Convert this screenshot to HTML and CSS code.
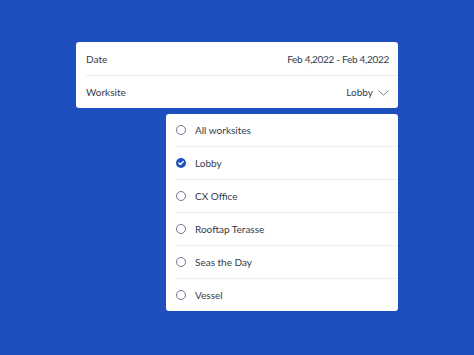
FILE: index.html
```html
<!DOCTYPE html>
<html>
<head>
<meta charset="utf-8">
<link rel="stylesheet" href="styles.css">
</head>
<body>
<div class="stage">
  <div class="card summary">
    <div class="row">
      <span class="label">Date</span>
      <span class="value date">Feb 4,2022 - Feb 4,2022</span>
    </div>
    <div class="row">
      <span class="label">Worksite</span>
      <span class="value">Lobby
        <svg class="chev" width="11" height="6" viewBox="0 0 11 6"><path d="M0.5 0.6 L5.5 5.2 L10.5 0.6" fill="none" stroke="#7a8194" stroke-width="1"/></svg>
      </span>
    </div>
  </div>
  <div class="card menu">
    <div class="opt"><span class="radio"></span><span>All worksites</span></div>
    <div class="opt"><svg class="check" width="10" height="10" viewBox="0 0 10 10"><circle cx="5" cy="5" r="5" fill="#1f4ebf"/><path d="M2.8 5.1 L4.4 6.6 L7.2 3.6" fill="none" stroke="#fff" stroke-width="1.4" stroke-linecap="round" stroke-linejoin="round"/></svg><span>Lobby</span></div>
    <div class="opt"><span class="radio"></span><span>CX Office</span></div>
    <div class="opt"><span class="radio"></span><span>Rooftap Terasse</span></div>
    <div class="opt"><span class="radio"></span><span>Seas the Day</span></div>
    <div class="opt"><span class="radio"></span><span>Vessel</span></div>
  </div>
</div>
</body>
</html>
```
FILE: styles.css
```css
html, body {
  margin: 0;
  padding: 0;
  background: #1f4ebf;
  width: 474px;
  height: 355px;
  overflow: hidden;
  font-family: "Lato", "Liberation Sans", sans-serif;
  font-size: 10px;
  color: #343b4c;
}
.stage {
  display: flex;
  flex-direction: column;
  padding-top: 42px;
}
.card {
  background: #fff;
  border-radius: 3px;
}
.summary {
  margin-left: 76px;
  width: 322px;
}
.row {
  height: 33px;
  display: flex;
  align-items: center;
  justify-content: space-between;
  margin-left: 10px;
  padding-right: 9px;
}
.row + .row {
  border-top: 1px solid #eceef2;
  height: 32px;
}
.value {
  display: flex;
  align-items: center;
  gap: 5px;
}
.date { letter-spacing: -0.3px; }
.chev { margin-top: 1px; }
.menu {
  margin-top: 6px;
  margin-left: 166px;
  width: 232px;
}
.opt {
  height: 33px;
  margin-left: 10px;
  display: flex;
  align-items: center;
  gap: 9px;
}
.opt:first-child { height: 32px; }
.opt + .opt {
  border-top: 1px solid #eceef2;
  height: 32px;
}
.radio {
  width: 8px;
  height: 8px;
  border: 1px solid #6e7894;
  border-radius: 50%;
}
.check { display: block; }
```
